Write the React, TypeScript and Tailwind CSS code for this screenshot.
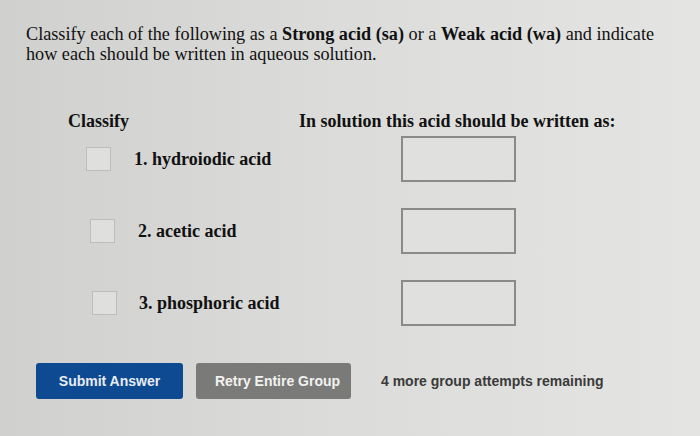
export default function App() {
  const rows = [
    { label: "1. hydroiodic acid", cb: "ml-[86px]", gap: "gap-[23px]" },
    { label: "2. acetic acid", cb: "ml-[90px]", gap: "gap-[23px]" },
    { label: "3. phosphoric acid", cb: "ml-[92px]", gap: "gap-[22px]" },
  ];
  return (
    <div className="w-[700px] h-[436px] overflow-hidden bg-linear-to-r from-[#d0d0ce] via-[#dcdcda] to-[#e4e4e2] text-[#111]">
      <div className="pt-[24px] pl-[26px] pr-[20px] font-['Liberation_Serif',serif] text-[18.2px] leading-[20px]">
        <p className="whitespace-nowrap">
          Classify each of the following as a <b>Strong acid (sa)</b> or a <b>Weak acid (wa)</b> and indicate
          <br />
          how each should be written in aqueous solution.
        </p>
      </div>
      <div className="mt-[47px] font-['Liberation_Serif',serif] font-bold text-[18px] leading-[20px]">
        <div className="flex">
          <div className="w-[299px] pl-[68px]">Classify</div>
          <div>In solution this acid should be written as:</div>
        </div>
        <div className="mt-[5px] flex flex-col gap-[26px]">
          {rows.map((r) => (
            <div key={r.label} className="grid grid-cols-[401px_115px] items-center">
              <div className={`flex items-center ${r.gap}`}>
                <div className={`${r.cb} w-[25px] h-[24px] border border-[#bdbdbb] bg-[#dfdfdd]`} />
                <span>{r.label}</span>
              </div>
              <div className="h-[46px] border-2 border-[#8a8a88] bg-[#e0e0de]" />
            </div>
          ))}
        </div>
      </div>
      <div className="mt-[37px] pl-[36px] flex items-center font-['Liberation_Sans',sans-serif] font-bold text-[14px]">
        <button className="w-[147px] h-[36px] rounded-[3px] bg-[#0e4a92] text-[#e8ecf2]">Submit Answer</button>
        <button className="ml-[13px] w-[155px] h-[36px] rounded-[3px] bg-[#7a7a78] pl-[8px] text-[#f2f2f0]">Retry Entire Group</button>
        <span className="ml-[30px] text-[#3a3a3a]">4 more group attempts remaining</span>
      </div>
    </div>
  );
}
